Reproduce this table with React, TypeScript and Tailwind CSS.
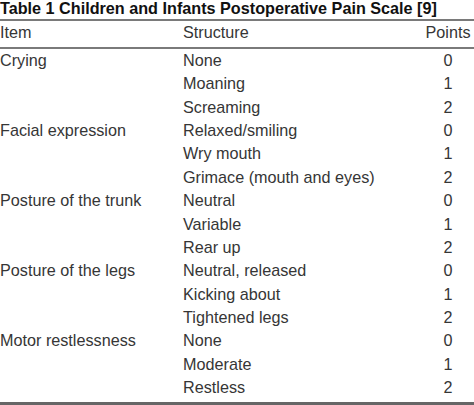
const rows: { item?: string; structure: string; points: number }[] = [
  { item: 'Crying', structure: 'None', points: 0 },
  { structure: 'Moaning', points: 1 },
  { structure: 'Screaming', points: 2 },
  { item: 'Facial expression', structure: 'Relaxed/smiling', points: 0 },
  { structure: 'Wry mouth', points: 1 },
  { structure: 'Grimace (mouth and eyes)', points: 2 },
  { item: 'Posture of the trunk', structure: 'Neutral', points: 0 },
  { structure: 'Variable', points: 1 },
  { structure: 'Rear up', points: 2 },
  { item: 'Posture of the legs', structure: 'Neutral, released', points: 0 },
  { structure: 'Kicking about', points: 1 },
  { structure: 'Tightened legs', points: 2 },
  { item: 'Motor restlessness', structure: 'None', points: 0 },
  { structure: 'Moderate', points: 1 },
  { structure: 'Restless', points: 2 },
];

export default function App() {
  return (
    <div className="h-[405px] w-[474px] overflow-hidden bg-white font-['Liberation_Sans',Arial,sans-serif] text-[#363636]">
      <div className="h-[19px] whitespace-nowrap text-[16.2px] font-bold leading-[16px] text-[#111]">
        Table 1 Children and Infants Postoperative Pain Scale [9]
      </div>
      <div className="border-t-2 border-[#7a7a7a]" />
      <div className="grid h-[26px] grid-cols-[183px_1fr_52px] pt-[1px] text-[16.2px] leading-[20px]">
        <div>Item</div>
        <div>Structure</div>
        <div className="text-center">Points</div>
      </div>
      <div className="border-t-2 border-[#7a7a7a]" />
      <div>
        {rows.map((r, i) => (
          <div key={i} className="grid h-[23.36px] grid-cols-[183px_1fr_52px] text-[16.2px] leading-[23.36px]">
            <div className="whitespace-nowrap">{r.item ?? ''}</div>
            <div className="whitespace-nowrap">{r.structure}</div>
            <div className="text-center">{r.points}</div>
          </div>
        ))}
      </div>
      <div className="mt-[2.6px] border-t-[3px] border-[#666]" />
    </div>
  );
}
